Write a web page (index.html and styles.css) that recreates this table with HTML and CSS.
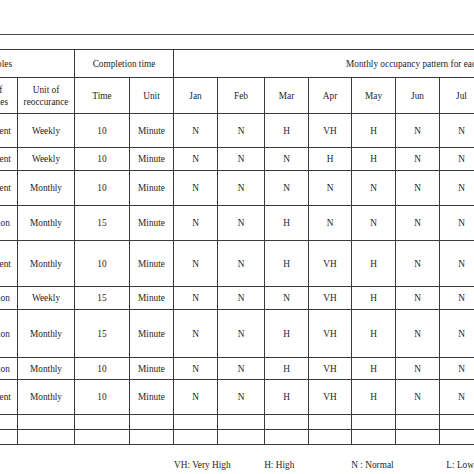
FILE: index.html
```html
<!DOCTYPE html>
<html>
<head>
<meta charset="utf-8">
<link rel="stylesheet" href="styles.css">
</head>
<body>
<div class="page">
  <div class="rule"></div>
  <div class="clip">
    <table class="grid">
      <colgroup>
        <col class="c-a"><col class="c-b"><col class="c-time"><col class="c-unit">
        <col class="m"><col class="m-feb"><col class="m"><col class="m-apr"><col class="m"><col class="m"><col class="m"><col class="m"><col class="m"><col class="m"><col class="m"><col class="m">
      </colgroup>
      <tr class="h1">
        <td colspan="2" class="ex-head">Examples</td>
        <td colspan="2">Completion time</td>
        <td colspan="12" class="month-head">Monthly occupancy pattern for each month</td>
      </tr>
      <tr class="h2">
        <td>No. of<br>examples</td>
        <td>Unit of<br>reoccurance</td>
        <td>Time</td>
        <td>Unit</td>
        <td>Jan</td><td>Feb</td><td>Mar</td><td>Apr</td><td>May</td><td>Jun</td><td>Jul</td><td>Aug</td><td>Sep</td><td>Oct</td><td>Nov</td><td>Dec</td>
      </tr>
      <tr class="r34"><td>Equipment</td><td>Weekly</td><td>10</td><td>Minute</td><td>N</td><td>N</td><td>H</td><td>VH</td><td>H</td><td>N</td><td>N</td><td>N</td><td>N</td><td>N</td><td>N</td><td>N</td></tr>
      <tr class="r23"><td>Equipment</td><td>Weekly</td><td>10</td><td>Minute</td><td>N</td><td>N</td><td>N</td><td>H</td><td>H</td><td>N</td><td>N</td><td>N</td><td>N</td><td>N</td><td>N</td><td>N</td></tr>
      <tr class="r35"><td>Equipment</td><td>Monthly</td><td>10</td><td>Minute</td><td>N</td><td>N</td><td>N</td><td>N</td><td>N</td><td>N</td><td>N</td><td>N</td><td>N</td><td>N</td><td>N</td><td>N</td></tr>
      <tr class="r35"><td>Inspection</td><td>Monthly</td><td>15</td><td>Minute</td><td>N</td><td>N</td><td>H</td><td>N</td><td>N</td><td>N</td><td>N</td><td>N</td><td>N</td><td>N</td><td>N</td><td>N</td></tr>
      <tr class="r46"><td>Equipment</td><td>Monthly</td><td>10</td><td>Minute</td><td>N</td><td>N</td><td>H</td><td>VH</td><td>H</td><td>N</td><td>N</td><td>N</td><td>N</td><td>N</td><td>N</td><td>N</td></tr>
      <tr class="r23"><td>Inspection</td><td>Weekly</td><td>15</td><td>Minute</td><td>N</td><td>N</td><td>N</td><td>VH</td><td>H</td><td>N</td><td>N</td><td>N</td><td>N</td><td>N</td><td>N</td><td>N</td></tr>
      <tr class="r48"><td>Inspection</td><td>Monthly</td><td>15</td><td>Minute</td><td>N</td><td>N</td><td>H</td><td>VH</td><td>H</td><td>N</td><td>N</td><td>N</td><td>N</td><td>N</td><td>N</td><td>N</td></tr>
      <tr class="r22"><td>Inspection</td><td>Monthly</td><td>10</td><td>Minute</td><td>N</td><td>N</td><td>H</td><td>VH</td><td>H</td><td>N</td><td>N</td><td>N</td><td>N</td><td>N</td><td>N</td><td>N</td></tr>
      <tr class="r35"><td>Equipment</td><td>Monthly</td><td>10</td><td>Minute</td><td>N</td><td>N</td><td>H</td><td>VH</td><td>H</td><td>N</td><td>N</td><td>N</td><td>N</td><td>N</td><td>N</td><td>N</td></tr>
      <tr class="r15"><td></td><td></td><td></td><td></td><td></td><td></td><td></td><td></td><td></td><td></td><td></td><td></td><td></td><td></td><td></td><td></td></tr>
      <tr class="r15"><td></td><td></td><td></td><td></td><td></td><td></td><td></td><td></td><td></td><td></td><td></td><td></td><td></td><td></td><td></td><td></td></tr>
    </table>
  </div>
  <div class="legend">
    <span class="lg lg-vh">VH: Very High</span>
    <span class="lg lg-h">H: High</span>
    <span class="lg lg-n">N : Normal</span>
    <span class="lg">L: Low</span>
  </div>
</div>
</body>
</html>
```

FILE: styles.css
```css
html, body {
  margin: 0;
  padding: 0;
  background: #ffffff;
}
body {
  width: 474px;
  height: 474px;
  overflow: hidden;
  font-family: "Liberation Serif", "Times New Roman", serif;
  font-size: 9.3px;
  color: #1e1e1e;
}
.page {
  padding-top: 34px;
}
.rule {
  border-top: 1px solid #4a4a4a;
  height: 14px;
}
.clip {
  width: 474px;
  overflow: hidden;
}
.grid {
  border-collapse: collapse;
  table-layout: fixed;
  margin-left: -37px;
  width: 740px;
}
.grid td {
  border: 1px solid #3a3a3a;
  text-align: center;
  vertical-align: middle;
  padding: 0;
  line-height: 12px;
  white-space: nowrap;
  overflow: hidden;
}
.c-a { width: 54px; }
.c-b { width: 57px; }
.c-time { width: 55px; }
.c-unit { width: 44px; }
.m { width: 44px; }
.m-feb { width: 47px; }
.m-apr { width: 43px; }

.h1 { height: 28px; }
.h2 { height: 36px; }
.r34 { height: 34px; }
.r23 { height: 23px; }
.r35 { height: 35px; }
.r46 { height: 46px; }
.r48 { height: 48px; }
.r22 { height: 22px; }
.r15 { height: 15px; }

.grid .ex-head {
  text-align: right;
  padding-right: 62px;
}
.grid .month-head {
  text-align: left;
  padding-left: 172px;
}
.legend {
  display: flex;
  padding-left: 174px;
  padding-top: 14px;
  line-height: 12px;
  white-space: nowrap;
}
.lg-vh { width: 91px; }
.lg-h { width: 88px; }
.lg-n { width: 96px; }
```
